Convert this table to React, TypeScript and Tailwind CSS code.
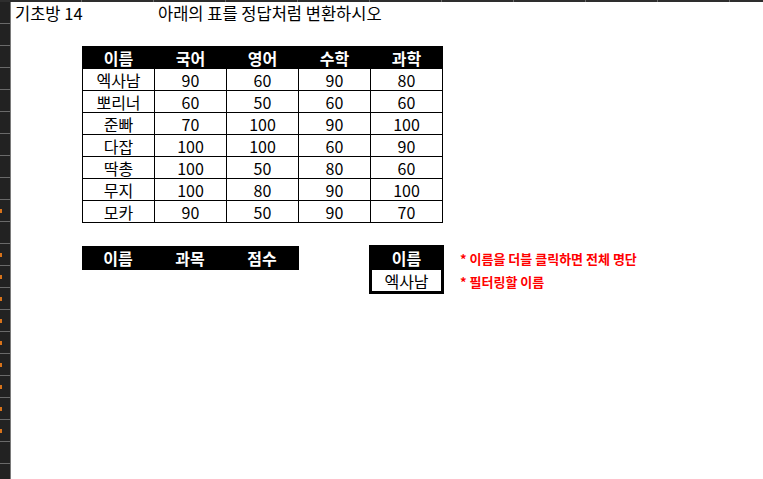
import React from "react";

const rows: [string, number, number, number, number][] = [
  ["엑사남", 90, 60, 90, 80],
  ["뽀리너", 60, 50, 60, 60],
  ["준빠", 70, 100, 90, 100],
  ["다잡", 100, 100, 60, 90],
  ["딱총", 100, 50, 80, 60],
  ["무지", 100, 80, 90, 100],
  ["모카", 90, 50, 90, 70],
];

const heads = ["이름", "국어", "영어", "수학", "과학"];

const stripRows = Array.from({ length: 21 }, (_, i) => i);
const orangeRows = [9, 11, 12, 13, 14, 15, 16, 17, 18, 19];

const font = { fontFamily: '"Noto Sans CJK KR", "Noto Sans", sans-serif' };

export default function App() {
  return (
    <div
      className="w-[763px] h-[479px] bg-white overflow-hidden flex flex-col text-black"
      style={font}
    >
      {/* top bar */}
      <div className="h-[2px] bg-[#2e2e2e] flex shrink-0">
        <div className="w-[82px] border-r border-[#6a6a6a] shrink-0" />
        {Array.from({ length: 10 }, (_, i) => (
          <div key={i} className="w-[72px] border-r border-[#6a6a6a] shrink-0" />
        ))}
      </div>
      <div className="flex flex-1">
        {/* left strip */}
        <div className="w-[11px] bg-[#222] border-r border-[#7a7a7a] shrink-0 flex flex-col">
          {stripRows.map((i) => (
            <div key={i} className="h-[22px] border-b border-[#6a6a6a] shrink-0 relative">
              {orangeRows.includes(i) && (
                <div className="absolute left-0 top-[9px] w-[2px] h-[4px] bg-[#d9731a]" />
              )}
            </div>
          ))}
        </div>
        {/* content */}
        <div className="flex-1 flex flex-col items-start">
          <div className="h-[22px] flex items-center text-[16.5px] leading-none">
            <span className="ml-[4px] w-[143px]">기초방 14</span>
            <span>아래의 표를 정답처럼 변환하시오</span>
          </div>
          <div className="h-[22px]" />
          <table className="ml-[71px] w-[361px] table-fixed border-collapse text-[16px] leading-none">
            <thead>
              <tr className="h-[22px] bg-black text-white">
                {heads.map((h) => (
                  <th key={h} className="w-[72px] border border-black font-bold p-0">
                    {h}
                  </th>
                ))}
              </tr>
            </thead>
            <tbody>
              {rows.map((r) => (
                <tr key={r[0]} className="h-[22px]">
                  {r.map((c, j) => (
                    <td key={j} className="w-[72px] border border-black text-center p-0">
                      {c}
                    </td>
                  ))}
                </tr>
              ))}
            </tbody>
          </table>
          <div className="flex mt-[22px]">
            <div className="ml-[71px] mt-[1px] w-[217px] h-[24px] bg-black text-white font-bold text-[16px] flex items-center leading-none">
              <span className="w-[72px] text-center">이름</span>
              <span className="w-[72px] text-center">과목</span>
              <span className="w-[72px] text-center">점수</span>
            </div>
            <div className="ml-[70px] w-[75px] h-[49px] bg-black flex flex-col px-[3px] pb-[3px]">
              <div className="h-[25px] text-white font-bold text-[16px] flex items-center justify-center leading-none">
                이름
              </div>
              <div className="flex-1 bg-white flex items-center justify-center text-[16px] leading-none">
                엑사남
              </div>
            </div>
            <div className="ml-[16px] flex flex-col text-[#ff0000] font-bold text-[13px] leading-none">
              <div className="h-[24px] flex items-center mt-[1px]">* 이름을 더블 클릭하면 전체 명단</div>
              <div className="h-[22px] flex items-center">* 필터링할 이름</div>
            </div>
          </div>
        </div>
      </div>
    </div>
  );
}
